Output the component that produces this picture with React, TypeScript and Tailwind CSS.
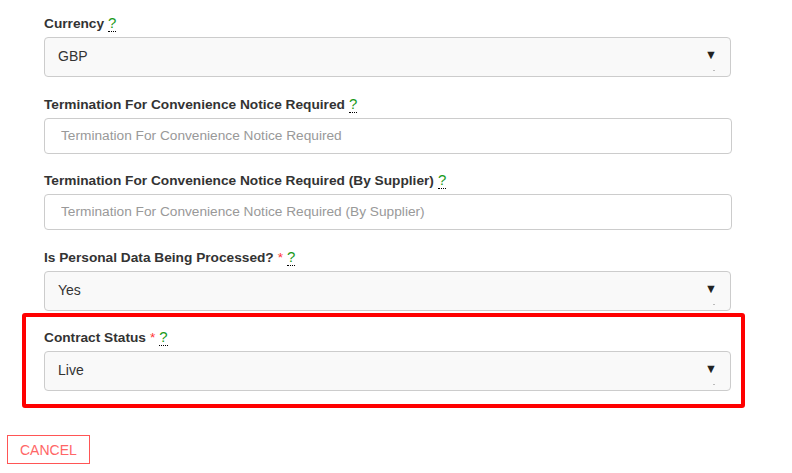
import React from 'react'

const font = { fontFamily: '"Liberation Sans", Arial, sans-serif' }

function Help() {
  return (
    <abbr
      title="Help"
      className="ml-[4px] font-normal text-[15px] text-[#1a9a1a] border-b border-dotted border-black cursor-help"
      style={{ textDecoration: 'none' }}
    >
      ?
    </abbr>
  )
}

function Label({ text, required }: { text: string; required?: boolean }) {
  return (
    <label className="block h-[20px] leading-[21px] mb-[5px] text-[13.7px] font-bold text-[#333]">
      {text}
      {required && <span className="ml-[4px] font-normal text-[#f33]">*</span>}
      <Help />
    </label>
  )
}

function Select({ value }: { value: string }) {
  return (
    <div className="relative flex items-center h-[40px] w-[687px] border border-[#ccc] rounded-[4px] bg-[#f9f9f9] pl-[13px] pb-[1px] text-[14px] text-[#333]">
      {value}
      <span className="absolute right-[13px] top-[11px] text-[12.5px] leading-none text-[#222]">▼</span>
      <span className="absolute right-[15px] bottom-[5px] w-[2px] h-[1px] bg-[#bbb]" />
    </div>
  )
}

function TextInput({ placeholder }: { placeholder: string }) {
  return (
    <input
      readOnly
      placeholder={placeholder}
      className="block h-[36px] w-[688px] border border-[#ccc] rounded-[4px] bg-white pl-[16px] pb-[1px] text-[13.7px] text-[#333] placeholder:text-[#999] outline-none"
      style={font}
    />
  )
}

export default function App() {
  return (
    <div className="w-[792px] h-[473px] bg-white overflow-hidden pt-[12px]" style={font}>
      <div className="ml-[44px]">
        <Label text="Currency" />
        <Select value="GBP" />
      </div>

      <div className="ml-[44px] mt-[16px]">
        <Label text="Termination For Convenience Notice Required" />
        <TextInput placeholder="Termination For Convenience Notice Required" />
      </div>

      <div className="ml-[44px] mt-[15px]">
        <Label text="Termination For Convenience Notice Required (By Supplier)" />
        <TextInput placeholder="Termination For Convenience Notice Required (By Supplier)" />
      </div>

      <div className="ml-[44px] mt-[16px]">
        <Label text="Is Personal Data Being Processed?" required />
        <Select value="Yes" />
      </div>

      <div className="ml-[22px] mt-[2px] w-[723px] border-[4px] border-[#ff0000] rounded-[3px] pt-[9px] pb-[13px] pl-[18px]">
        <Label text="Contract Status" required />
        <Select value="Live" />
      </div>

      <button className="mt-[27px] ml-[7px] h-[29px] px-[12px] border border-[#f55] text-[14px] text-[#f66] bg-white leading-none">
        CANCEL
      </button>
    </div>
  )
}
